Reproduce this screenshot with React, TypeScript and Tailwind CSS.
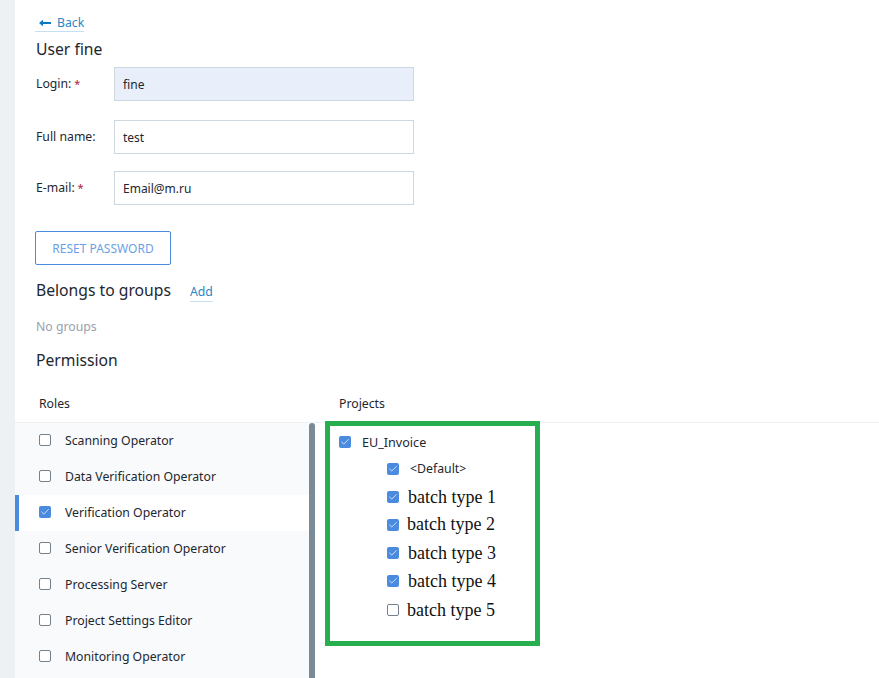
import { Check } from "lucide-react";

const roles = [
  { name: "Scanning Operator", checked: false },
  { name: "Data Verification Operator", checked: false },
  { name: "Verification Operator", checked: true },
  { name: "Senior Verification Operator", checked: false },
  { name: "Processing Server", checked: false },
  { name: "Project Settings Editor", checked: false },
  { name: "Monitoring Operator", checked: false },
];

const batches = [
  { name: "batch type 1", checked: true, cls: "h-[28px]", text: "ml-[9px]" },
  { name: "batch type 2", checked: true, cls: "h-[28px]", text: "ml-[8px] mb-[2px]" },
  { name: "batch type 3", checked: true, cls: "h-[28px]", text: "ml-[9px]" },
  { name: "batch type 4", checked: true, cls: "h-[28px]", text: "ml-[9px]" },
  { name: "batch type 5", checked: false, cls: "h-[29px]", text: "ml-[8px] mt-[2px]" },
];

function Box({ checked, cls = "" }: { checked: boolean; cls?: string }) {
  if (checked) {
    return (
      <span className={`flex h-[12px] w-[12px] shrink-0 items-center justify-center rounded-[2px] bg-[#4a8be0] ${cls}`}>
        <Check size={10} strokeWidth={2.25} className="text-[#d5e4f9]" />
      </span>
    );
  }
  return <span className={`h-[12px] w-[12px] shrink-0 rounded-[2px] border border-[#75818c] bg-white ${cls}`} />;
}

function Field({ label, value, required, filled, cls }: { label: string; value: string; required?: boolean; filled?: boolean; cls: string }) {
  return (
    <div className={`flex items-center ${cls}`}>
      <div className="w-[79px] pl-[1px] text-[#1d2730]">
        {label}
        {required && <span className="text-[11px] text-[#b0203c]"> *</span>}
      </div>
      <div className={`flex h-[34px] w-[300px] items-center border border-[#cfd8de] px-[8px] pt-[2px] text-[12px] text-[#1d2730] ${filled ? "bg-[#e8effb]" : "bg-white"}`}>
        {value}
      </div>
    </div>
  );
}

export default function App() {
  return (
    <div className="flex h-[678px] w-[879px] overflow-hidden bg-white font-['Noto_Sans',sans-serif] text-[12.25px] text-[#1d2730]">
      <div className="w-[15px] shrink-0 bg-[#edf1f4]" />
      <div className="min-w-0 flex-1">
        <div className="pl-[20px]">
          <div className="h-[15px]" />
          <a className="flex h-[17px] w-[49px] items-center gap-[6px] border-b border-[#c5e0f2] pl-[4px] text-[#2c86c5]">
            <svg width="12" height="8" viewBox="0 0 12 8" className="shrink-0 text-[#0b78c2]" fill="currentColor">
              <path d="M0 4 L4 0.8 L4 3 L12 3 L12 5 L4 5 L4 7.2 Z" />
            </svg>
            Back
          </a>
          <h1 className="mt-[5px] h-[24px] pl-[1px] text-[15.7px] leading-[24px] text-[#1d2730]">User fine</h1>
          <Field label="Login:" value="fine" required filled cls="mt-[6px]" />
          <Field label="Full name:" value="test" cls="mt-[19px]" />
          <Field label="E-mail:" value="Email@m.ru" required cls="mt-[17px]" />
          <button className="mt-[26px] flex h-[34px] w-[136px] items-center justify-center rounded-[2px] border border-[#4a8be0] pt-[2px] text-[12px] text-[#6c9fe6]">
            RESET PASSWORD
          </button>
          <div className="mt-[13px] flex h-[24px] items-center">
            <h2 className="pl-[1px] pt-[2px] text-[15.7px] text-[#1d2730]">Belongs to groups</h2>
            <a className="ml-[19px] mt-[5px] border-b border-[#c5e0f2] leading-[18px] text-[#2c86c5]">Add</a>
          </div>
          <p className="mt-[16px] h-[18px] pl-[1px] leading-[18px] text-[#98a2aa]">No groups</p>
          <h2 className="mt-[12px] h-[24px] pl-[1px] text-[15.7px] leading-[24px] text-[#1d2730]">Permission</h2>
        </div>
        <div className="mt-[22px] flex h-[29px] border-b border-[#edf1f4] pt-[1px]">
          <div className="w-[324px] pl-[24px]">Roles</div>
          <div>Projects</div>
        </div>
        <div className="flex">
          <div className="relative h-[300px] w-[294px] shrink-0 bg-[#f8fafc]">
            {roles.map((r) => (
              <div key={r.name} className={`flex h-[36px] items-center gap-[14px] pl-[24px] ${r.checked ? "bg-white" : ""}`}>
                <Box checked={r.checked} cls="mb-[2px]" />
                <span className="text-[#1d2730]">{r.name}</span>
              </div>
            ))}
            <div className="absolute left-0 top-[72px] h-[36px] w-[4px] bg-[#4a8be0]" />
          </div>
          <div className="h-[300px] w-[6px] rounded-t-[3px] bg-[#7b8a97]" />
          <div className="ml-[10px] mt-[-2px] h-[225px] w-[215px] border-[5px] border-[#27ae4f] bg-white">
            <div className="flex h-[32px] items-center gap-[11px] pl-[9px]">
              <Box checked />
              <span className="pt-[2px] text-[12.6px]">EU_Invoice</span>
            </div>
            <div className="flex h-[22px] items-center gap-[11px] pl-[57px] text-[12.3px]">
              <Box checked />
              <span>&lt;Default&gt;</span>
            </div>
            <div className="mt-[3px] pl-[57px] font-['Liberation_Serif',serif] text-[18px] text-[#111]">
              {batches.map((b) => (
                <div key={b.name} className={`flex items-center ${b.cls}`}>
                  <Box checked={b.checked} />
                  <span className={`whitespace-nowrap ${b.text}`}>{b.name}</span>
                </div>
              ))}
            </div>
          </div>
        </div>
      </div>
    </div>
  );
}
